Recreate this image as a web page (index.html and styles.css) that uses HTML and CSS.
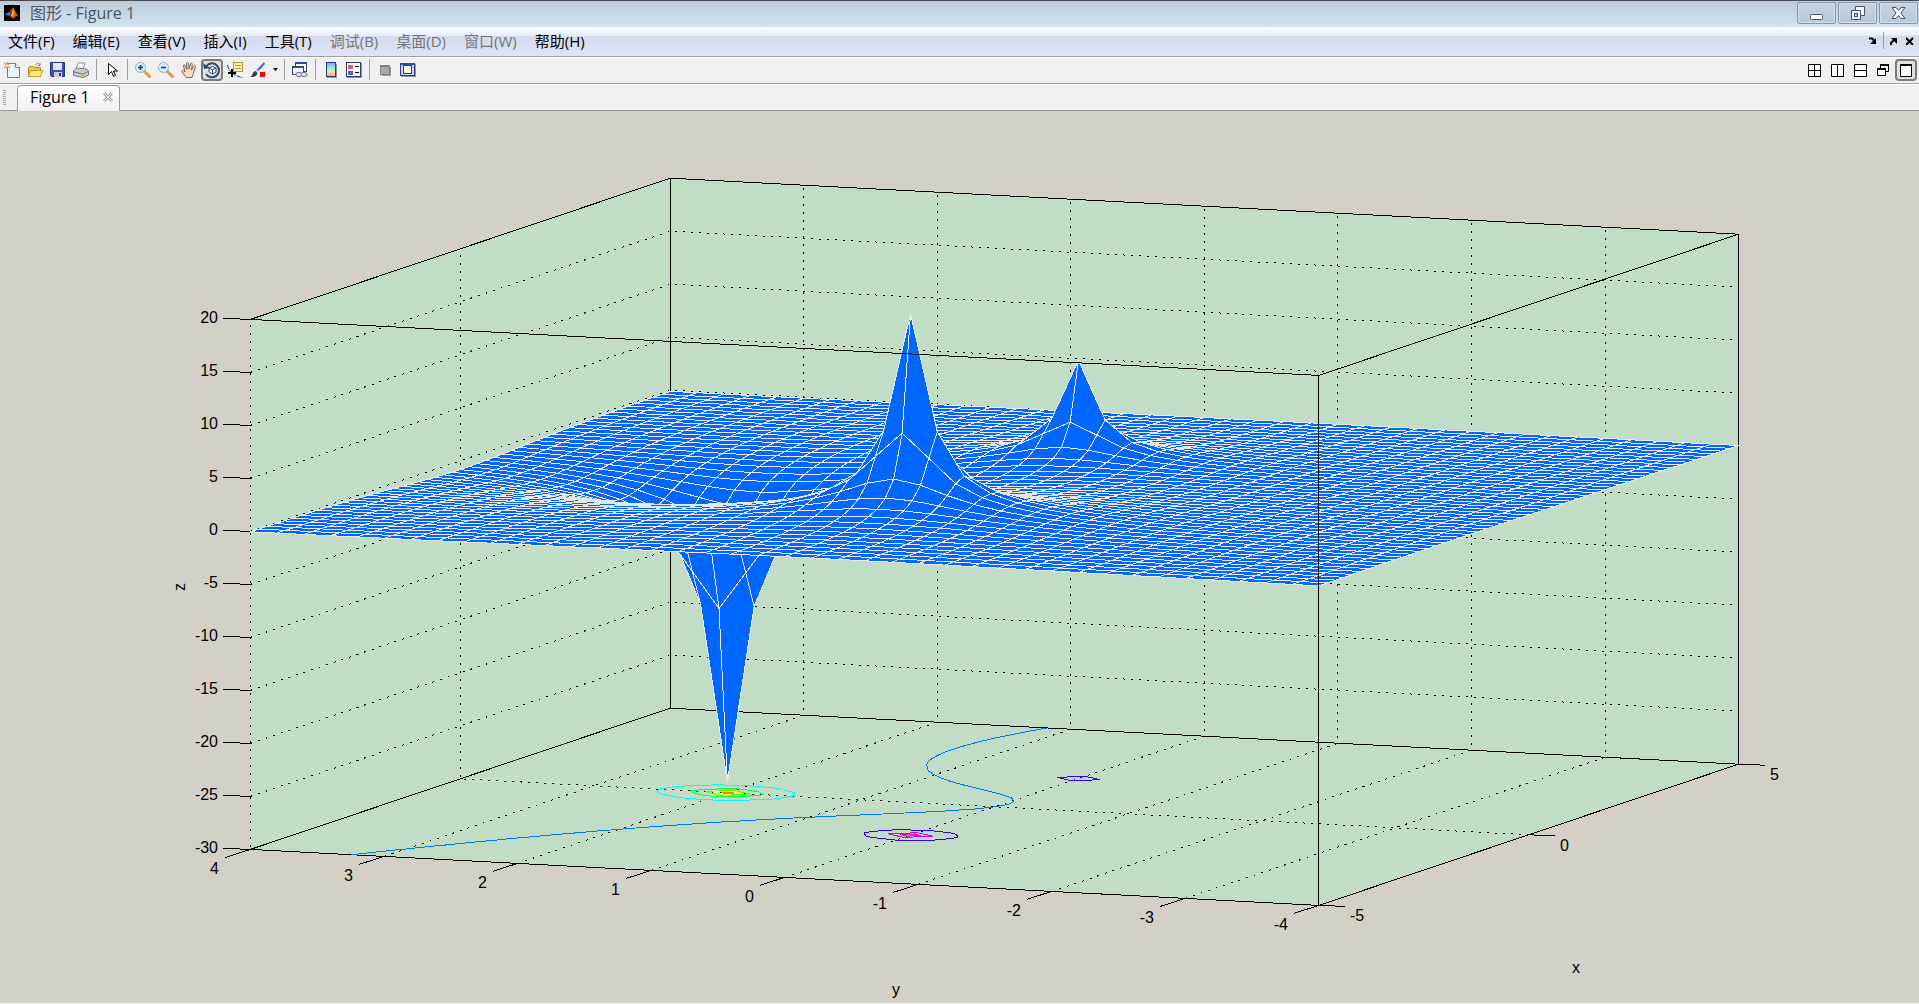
FILE: index.html
```html
<!DOCTYPE html>
<html lang="zh-CN">
<head>
<meta charset="utf-8">
<title>图形 - Figure 1</title>
<link rel="stylesheet" href="styles.css">
</head>
<body>
<header class="titlebar">
  <svg class="app-icon" viewBox="0 0 16 16" width="16" height="16" aria-hidden="true">
    <rect width="16" height="16" fill="#000"/>
    <path d="M1 9l4-2 2 2-2 2z" fill="#2c8fb5"/>
    <path d="M5 7l4-5-1 7-2 3-1-1 2-2z" fill="#8c3b1c"/>
    <path d="M9 2c1 1 3 7 6 10l-2-1c-2 0-2 2-4 3-1-2-2-3-3-2l2-3z" fill="#e8571c"/>
    <path d="M9 3l1 5-2 4-1-1 1-3z" fill="#ffb23e"/>
  </svg>
  <h1 class="title">图形 - Figure 1</h1>
  <div class="window-buttons">
    <button class="window-button" aria-label="最小化"><svg viewBox="0 0 36 20" width="36" height="20"><rect x="12.500" y="11.500" width="12" height="5" rx="1" fill="#fff" stroke="#4b5362"/></svg></button>
    <button class="window-button" aria-label="还原"><svg viewBox="0 0 36 20" width="36" height="20"><path d="M16.500 3.500h9v9h-4v4h-9v-9h4z" fill="#f4f6f9" stroke="#4b5362"/><path d="M16.500 7.500h5v5" fill="none" stroke="#4b5362"/><rect x="15.500" y="10.500" width="3" height="3" fill="#b9c8d8" stroke="#4b5362"/></svg></button>
    <button class="window-button" aria-label="关闭"><svg viewBox="0 0 36 20" width="36" height="20"><path d="M12 4.500h4l2.500 3 2.500-3h4l-4 5.500 4 5.500h-4l-2.500-3-2.500 3h-4l4-5.500z" fill="#f4f6f9" stroke="#4b5362" stroke-linejoin="round"/></svg></button>
  </div>
</header>

<nav class="menubar">
  <button class="menu">文件(F)</button>
  <button class="menu">编辑(E)</button>
  <button class="menu">查看(V)</button>
  <button class="menu">插入(I)</button>
  <button class="menu">工具(T)</button>
  <button class="menu" disabled>调试(B)</button>
  <button class="menu" disabled>桌面(D)</button>
  <button class="menu" disabled>窗口(W)</button>
  <button class="menu">帮助(H)</button>
  <div class="dock-controls">
    <button class="dock" aria-label="停靠"><svg viewBox="0 0 8 8" width="8" height="8"><path d="M0 1.500h3l2 2" fill="none" stroke="#000" stroke-width="2"/><path d="M7 1v6H1z"/></svg></button>
    <span class="dock-rule"></span>
    <button class="dock" aria-label="取消停靠"><svg viewBox="0 0 8 8" width="8" height="8"><path d="M1 8V6l3-3" fill="none" stroke="#000" stroke-width="2"/><path d="M1 1h6v6z"/></svg></button>
    <button class="dock" aria-label="关闭图形"><svg viewBox="0 0 8 8" width="8" height="8"><path d="M0 1l7 7M7 1L0 8" stroke="#000" stroke-width="2"/></svg></button>
  </div>
</nav>

<div class="toolbar" role="toolbar">
  <button class="tool" aria-label="新建图形"><svg viewBox="0 0 16 16" width="16" height="16"><path d="M3.500 1.500h8l4 4v10h-12z" fill="#eaf2fb" stroke="#5b7fae"/><path d="M11.500 1.500v4h4" fill="#fff" stroke="#5b7fae"/><path d="M0 1l6 5M6 1L0 6M3 0v7" stroke="#e06a2c"/><circle cx="3" cy="3.500" r="1.500" fill="#ffd9a0"/></svg></button>
  <button class="tool" aria-label="打开文件"><svg viewBox="0 0 16 16" width="16" height="16"><path d="M1.500 14.500v-9l1-1h4l1 1h6v9z" fill="#f3c33c" stroke="#b98a1c"/><path d="M1.500 14.500l2-6h12l-2 6z" fill="#ffe98a" stroke="#c59a27"/><path d="M8 3c2-2 4-2 5 0m0-2v2.500h-2.500" fill="none" stroke="#a08340"/></svg></button>
  <button class="tool" aria-label="保存图形"><svg viewBox="0 0 16 16" width="16" height="16"><path d="M.5.5h14v14h-13l-1-1z" fill="#3e52b4" stroke="#25348a"/><rect x="3" y="1" width="9" height="7" fill="#dbe6f8"/><rect x="4" y="10" width="8" height="5" fill="#c9ccd6"/><rect x="9" y="11" width="2" height="3" fill="#25348a"/></svg></button>
  <button class="tool" aria-label="打印图形"><svg viewBox="0 0 16 16" width="16" height="16"><path d="M3 7l2-6h7l-2 7z" fill="#fff" stroke="#8a93a3"/><path d="M.5 9l3-3 10 1 2 2v4l-5 2.500-10-2z" fill="#c8ccd2" stroke="#787e88"/><path d="M1 10l9 2 5-2.500" fill="none" stroke="#6a7079"/><path d="M8 14l4-1.500" stroke="#e0b830" stroke-width="2"/></svg></button>
  <span class="rule"></span>
  <button class="tool" aria-label="编辑绘图"><svg viewBox="0 0 16 16" width="16" height="16"><path d="M4.500 1.500v11l3-3 2 5 2-1-2-4.500h4z" fill="#fff" stroke="#000"/></svg></button>
  <span class="rule"></span>
  <button class="tool" aria-label="放大"><svg viewBox="0 0 16 16" width="16" height="16"><path d="M9.500 9.500l5 5" stroke="#dc9c42" stroke-width="3" stroke-linecap="round"/><circle cx="5.500" cy="5.500" r="5" fill="#d8effb" stroke="#8ab4d6"/><path d="M5.500 3v5M3 5.500h5" stroke="#123f8c" stroke-width="1.600"/></svg></button>
  <button class="tool" aria-label="缩小"><svg viewBox="0 0 16 16" width="16" height="16"><path d="M9.500 9.500l5 5" stroke="#dc9c42" stroke-width="3" stroke-linecap="round"/><circle cx="5.500" cy="5.500" r="5" fill="#d8effb" stroke="#8ab4d6"/><path d="M3 5.500h5" stroke="#123f8c" stroke-width="1.600"/></svg></button>
  <button class="tool" aria-label="平移"><svg viewBox="0 0 16 16" width="16" height="16"><path d="M4.500 14.500L.8 9.500c0-1.500 1.500-1.500 2.500 0L4 10 2.500 4c0-1.600 1.500-1.600 2 0L6 7.500l-.5-6c.2-1.500 1.800-1.500 2 0l.7 5.500L9.500 2c.5-1.300 2-1 1.800.5l-.8 5.500 2.300-3.500c1-1 2.200-.3 1.600 1l-2.400 7-1 3h-6z" fill="#fbdcb8" stroke="#5a483c" stroke-width=".8"/></svg></button>
  <button class="tool pressed" aria-label="三维旋转" aria-pressed="true"><svg viewBox="0 0 18 18" width="18" height="18"><path d="M3.500 5A7 7 0 1 1 3 13" fill="none" stroke="#32476e" stroke-width="2"/><path d="M0 2l1 6 6-1z" fill="#32476e"/><path d="M6 7l3.500-1.500L13 7v4l-3.500 2L6 11zM6 7l3.500 2L13 7M9.500 9v4" fill="#fff" stroke="#32476e"/></svg></button>
  <button class="tool" aria-label="数据游标"><svg viewBox="0 0 16 16" width="16" height="16"><path d="M.5 3c1 5 3 7 5 8.500s6 3.500 10 4" fill="none" stroke="#2030e0" stroke-dasharray="4 1"/><rect x="6.500" y=".5" width="9" height="9" fill="#f4efa0" stroke="#a89b4c"/><path d="M8 3.500h6M8 6.500h6" stroke="#a89b4c"/><path d="M5 7v8M1 11h8" stroke="#000" stroke-width="2"/></svg></button>
  <button class="tool" aria-label="刷亮数据"><svg viewBox="0 0 16 16" width="16" height="16"><path d="M14.500 1L7 9" stroke="#5c6fa6" stroke-width="2.400"/><path d="M7.500 7.500l2 2-1.500 1.500-2-2z" fill="#ccd2e0"/><path d="M0 15c3-1 2-5 5.500-6l2 2C7 14 4 15.500 0 15z" fill="#3c3c44"/><rect x="10" y="10" width="5" height="5" fill="#f00"/></svg></button>
  <button class="tool-drop" aria-label="刷亮选项"><svg viewBox="0 0 5 3" width="5" height="3"><path d="M0 0h5L2.500 3z"/></svg></button>
  <span class="rule"></span>
  <button class="tool" aria-label="链接绘图"><svg viewBox="0 0 16 16" width="16" height="16"><rect x="3.500" y=".5" width="11" height="9" fill="#fff" stroke="#2c4a84"/><path d="M3 1.500h12" stroke="#2c4a84"/><rect x=".5" y="4.500" width="11" height="8" fill="#eef3fa" stroke="#2c4a84"/><path d="M0 5.500h12" stroke="#2c4a84"/><rect x="4" y="10.500" width="6" height="4" rx="2" fill="#dfe3ea" stroke="#66748c"/><rect x="9" y="10.500" width="6" height="4" rx="2" fill="#dfe3ea" stroke="#66748c"/></svg></button>
  <span class="rule"></span>
  <button class="tool" aria-label="插入颜色栏"><svg viewBox="0 0 16 16" width="16" height="16"><defs><linearGradient id="bar" x2="0" y2="1"><stop stop-color="#8f8fe8"/><stop offset=".4" stop-color="#9be8ee"/><stop offset=".65" stop-color="#e8ec9a"/><stop offset="1" stop-color="#ee9a90"/></linearGradient></defs><rect x="4" y="2" width="10" height="14" fill="#8d93a3"/><rect x="3.500" y=".5" width="9" height="14" fill="url(#bar)" stroke="#2a3f78"/></svg></button>
  <button class="tool" aria-label="插入图例"><svg viewBox="0 0 16 16" width="16" height="16"><rect x="1" y="1" width="15" height="15" fill="#8d93a3"/><rect x=".5" y=".5" width="14" height="14" fill="#fff" stroke="#2a3f78"/><rect x="2" y="3" width="5" height="4" fill="#e85a5a"/><rect x="2" y="9" width="5" height="4" fill="#5a5ae8"/><path d="M9 4.500h4M9 10.500h4" stroke="#000"/></svg></button>
  <span class="rule"></span>
  <button class="tool" aria-label="隐藏绘图工具"><svg viewBox="0 0 16 16" width="16" height="16"><path d="M5 5h9v9H5z" fill="#9a9a9a"/><rect x="3.500" y="3.500" width="9" height="9" fill="#a9a9a9" stroke="#808080"/><path d="M3 4h10" stroke="#808080" stroke-width="2"/></svg></button>
  <button class="tool" aria-label="显示绘图工具"><svg viewBox="0 0 16 16" width="16" height="16"><path d="M1 2h15v13H1z" fill="#8d93a3"/><rect x=".5" y="1.500" width="14" height="12" fill="#cfd2d8" stroke="#2a3f78"/><path d="M0 2h15" stroke="#2a4f9c" stroke-width="2"/><rect x="3.500" y="3.500" width="8" height="8" fill="#fff" stroke="#2a3f78"/></svg></button>
  <div class="layouts">
    <button class="tool" aria-label="平铺"><svg viewBox="0 0 14 14" width="14" height="14"><path d="M1.500 1.500h12v12h-12zM7.500 1.500v12M1.500 7.500h12" fill="#fff" stroke="#000"/></svg></button>
    <button class="tool" aria-label="左右平铺"><svg viewBox="0 0 14 14" width="14" height="14"><path d="M1.500 1.500h12v12h-12zM7.500 1.500v12" fill="#fff" stroke="#000"/></svg></button>
    <button class="tool" aria-label="上下平铺"><svg viewBox="0 0 14 14" width="14" height="14"><path d="M1.500 1.500h12v12h-12zM1.500 7.500h12" fill="#fff" stroke="#000"/></svg></button>
    <button class="tool" aria-label="浮动"><svg viewBox="0 0 14 14" width="14" height="14"><path d="M4.500 1.500h8v7h-8z" fill="#fff" stroke="#000"/><path d="M4 2h9M1 6h9" stroke="#000" stroke-width="2"/><path d="M1.500 6.500h8v6h-8z" fill="#fff" stroke="#000"/></svg></button>
    <button class="tool pressed" aria-label="最大化" aria-pressed="true"><svg viewBox="0 0 14 14" width="14" height="14"><path d="M1.500 1.500h11v12h-11z" fill="#fff" stroke="#000"/><path d="M1 2h12" stroke="#000" stroke-width="2"/></svg></button>
  </div>
</div>

<div class="tabbar">
  <span class="grip"></span>
  <div class="tab">
    <span>Figure 1</span>
    <button class="tab-close" aria-label="关闭标签"><svg viewBox="0 0 10 10" width="10" height="10"><path d="M1 1l8 8M9 1L1 9" stroke="#a6a6a6" stroke-width="3"/><path d="M1 1l8 8M9 1L1 9" stroke="#eee" stroke-width="1"/></svg></button>
  </div>
</div>

<main class="figure">
  <svg class="plot" id="plot" viewBox="0 111 1919 892" role="img" aria-label="电位曲面与等值线"></svg>
</main>
<script src="plot.js"></script>
</body>
</html>
```
FILE: styles.css
```css
* { box-sizing: border-box; }

body {
  margin: 0;
  min-height: 100vh;
  display: flex;
  flex-direction: column;
  background: #d4d0c8;
  font: 15px/20px "Open Sans", "Noto Sans CJK SC", sans-serif;
  color: #000;
}

button {
  margin: 0;
  padding: 0;
  border: 0;
  background: none;
  font: inherit;
  color: inherit;
}

svg { display: block; }

.titlebar {
  display: flex;
  align-items: center;
  height: 27px;
  padding: 0 1px 2px 4px;
  border-top: 1px solid #4a4a50;
  background: linear-gradient(#bccad9, #d5e3f1);
}

.title {
  flex: 1;
  margin: 0 0 0 10px;
  font-size: 16px;
  font-weight: 400;
  color: #4c5662;
}

.window-buttons {
  display: flex;
  gap: 2px;
  align-self: flex-start;
  padding-top: 1px;
}

.window-button {
  width: 39px;
  height: 22px;
  border: 1px solid #8795ad;
  border-radius: 2px;
  background: linear-gradient(#c5d2e0, #b9c9da);
  box-shadow: inset 0 0 0 1px #d3deea;
}

.menubar {
  display: flex;
  align-items: center;
  gap: 18px;
  height: 30px;
  padding: 0 5px 2px 8px;
  border-bottom: 1px solid #a0a0a0;
  background: linear-gradient(#fff 0, #e6eaf6 9px, #d3daed 9px, #dde4f6 100%);
}

.menu:disabled { color: #767676; }

.dock-controls {
  display: flex;
  align-items: center;
  gap: 6px;
  margin-left: auto;
}

.dock + .dock { margin-left: 2px; }

.dock-rule {
  width: 1px;
  height: 17px;
  background: #a0a0a0;
}

.toolbar {
  display: flex;
  align-items: center;
  gap: 1px;
  height: 27px;
  padding: 0 2px 2px 1px;
  border-top: 1px solid #fff;
  border-bottom: 1px solid #a0a0a0;
  background: #f0f0f0;
}

.tool {
  display: flex;
  align-items: center;
  justify-content: center;
  width: 22px;
  height: 22px;
}

.pressed {
  border: 2px solid #7c7c7c;
  border-radius: 4px;
  background: #e0e0e0;
}

.tool-drop {
  display: flex;
  justify-content: center;
  width: 10px;
}

.rule {
  width: 1px;
  height: 21px;
  margin: 0 3px;
  background: #a0a0a0;
}

.layouts {
  display: flex;
  gap: 1px;
  margin-left: auto;
}

.tabbar {
  display: flex;
  align-items: center;
  height: 27px;
  border-top: 1px solid #fff;
  border-bottom: 1px solid #999;
  background: #f0f0f0;
}

.grip {
  width: 3px;
  height: 15px;
  margin: 0 11px 0 3px;
  background: repeating-linear-gradient(#aaa 0 1px, #f0f0f0 1px 2px);
}

.tab {
  display: flex;
  align-items: center;
  justify-content: space-between;
  align-self: stretch;
  width: 103px;
  margin-bottom: -1px;
  padding: 0 6px 3px 12px;
  border: 1px solid #999;
  border-bottom: 0;
  border-radius: 4px 4px 0 0;
  background: linear-gradient(#fff, #f0f0f0);
  font-size: 16px;
}

.figure {
  flex: 1;
  border-bottom: 1px solid #f0efe8;
}

.plot {
  width: 100%;
  height: auto;
  font: 16px "Liberation Sans", Arial, sans-serif;
}

.plot path { shape-rendering: crispEdges; }

.wall { fill: #c1ddc6; }
.edge { fill: none; stroke: #000; }
.grid { fill: none; stroke: #000; stroke-dasharray: 2 6; }
.contour { fill: none; }
.patch { fill: #06f; stroke: #e8e8e8; stroke-linejoin: bevel; }
.end { text-anchor: end; }
.middle { text-anchor: middle; }
```
FILE: plot.js
```js
const svg = document.getElementById('plot');

function add(name, cls, attrs, text) {
  const node = document.createElementNS('http://www.w3.org/2000/svg', name);
  if (cls) node.setAttribute('class', cls);
  for (const key in attrs) node.setAttribute(key, attrs[key]);
  if (text !== undefined) node.textContent = text;
  svg.appendChild(node);
}

// Orthographic projection of the data box onto the figure.
function project(x, y, z) {
  return [
    250.4 + 133.55 * (4 - y) + 41.98 * (x + 5),
    849.4 + 7 * (4 - y) - 14.12 * (x + 5) - 10.6 * (z + 30)
  ];
}

// Potential of three point charges.
function potential(x, y) {
  return 2 / Math.sqrt((x + 2) ** 2 + y ** 2 + 0.01)
    + 1 / Math.sqrt((x - 2) ** 2 + y ** 2 + 0.01)
    - 3 / Math.sqrt(x ** 2 + (y - 2) ** 2 + 0.01);
}

function track(points) {
  return 'M' + points.map(p => project(...p).map(v => v.toFixed(1)).join(' ')).join('L');
}

// Walls and floor
add('path', 'wall', { d: track([[-5, 4, 20], [5, 4, 20], [5, -4, 20], [5, -4, -30], [-5, -4, -30], [-5, 4, -30]]) + 'Z' });

// Grid
for (let z = -30; z <= 20; z += 5) {
  add('path', 'grid', { d: track([[-5, 4, z], [5, 4, z], [5, -4, z]]) });
}
for (let y = -4; y <= 4; y++) {
  add('path', 'grid', { d: track([[-5, y, -30], [5, y, -30], [5, y, 20]]) });
}
for (const x of [-5, 0, 5]) {
  add('path', 'grid', { d: track([[x, -4, -30], [x, 4, -30], [x, 4, 20]]) });
}

// Back edges of the box
add('path', 'edge', { d: track([[-5, 4, 20], [5, 4, 20], [5, -4, 20], [5, -4, -30], [5, 4, -30], [5, 4, 20]]) });
add('path', 'edge', { d: track([[5, 4, -30], [-5, 4, -30], [-5, -4, -30], [5, -4, -30]]) });

// Sampled surface
const nx = 50, ny = 40;
const gx = i => -5 + i * 0.2;
const gy = j => -4 + j * 0.2;
const grid = [];
for (let i = 0; i <= nx; i++) {
  grid.push([]);
  for (let j = 0; j <= ny; j++) grid[i].push([gx(i), gy(j), potential(gx(i), gy(j))]);
}

// Contours on the floor
const levels = [[-25, '#ff7800'], [-20, '#ffff00'], [-15, '#5aff00'], [-10, '#00ff4c'],
  [-5, '#00fff0'], [0, '#0078ff'], [5, '#3300ff'], [10, '#c800ff'], [15, '#ff0096']];
for (const [level, colour] of levels.reverse()) {
  let d = '';
  for (let i = 0; i < nx; i++) {
    for (let j = 0; j < ny; j++) {
      const ring = [grid[i][j], grid[i + 1][j], grid[i + 1][j + 1], grid[i][j + 1]];
      const cuts = [];
      ring.forEach((a, k) => {
        const b = ring[(k + 1) % 4];
        if ((a[2] < level) !== (b[2] < level)) {
          const t = (level - a[2]) / (b[2] - a[2]);
          cuts.push([a[0] + t * (b[0] - a[0]), a[1] + t * (b[1] - a[1]), -30]);
        }
      });
      for (let k = 0; k + 1 < cuts.length; k += 2) d += track([cuts[k], cuts[k + 1]]);
    }
  }
  add('path', 'contour', { d, stroke: colour });
}

// Surface patches, far to near
for (let i = nx - 1; i >= 0; i--) {
  for (let j = ny - 1; j >= 0; j--) {
    add('path', 'patch', { d: track([grid[i][j], grid[i + 1][j], grid[i + 1][j + 1], grid[i][j + 1]]) + 'Z' });
  }
}

// Front edges of the box
add('path', 'edge', { d: track([[-5, 4, 20], [-5, -4, 20], [5, -4, 20]]) });
add('path', 'edge', { d: track([[-5, -4, 20], [-5, -4, -30]]) });

// Ticks and their labels
function tick(p, dx, dy, tx, ty, cls, label) {
  const [x, y] = project(...p);
  add('path', 'edge', { d: `M${x.toFixed(1)} ${y.toFixed(1)}l${dx} ${dy}` });
  add('text', cls, { x: Math.round(x) + tx, y: Math.round(y) + ty }, label);
}
for (let z = -30; z <= 20; z += 5) tick([-5, 4, z], -27, -1, -32, 4, 'end', z);
for (let y = -4; y <= 4; y++) tick([-5, y, -30], -25, 8, -31, 25, 'end', y);
for (const x of [-5, 0, 5]) tick([x, -4, -30], 26, 1, 31, 16, '', x);

add('text', 'middle', { x: 1576, y: 973 }, 'x');
add('text', 'middle', { x: 896, y: 995 }, 'y');
add('text', 'middle', { transform: 'translate(185 587) rotate(-90)' }, 'z');
```
